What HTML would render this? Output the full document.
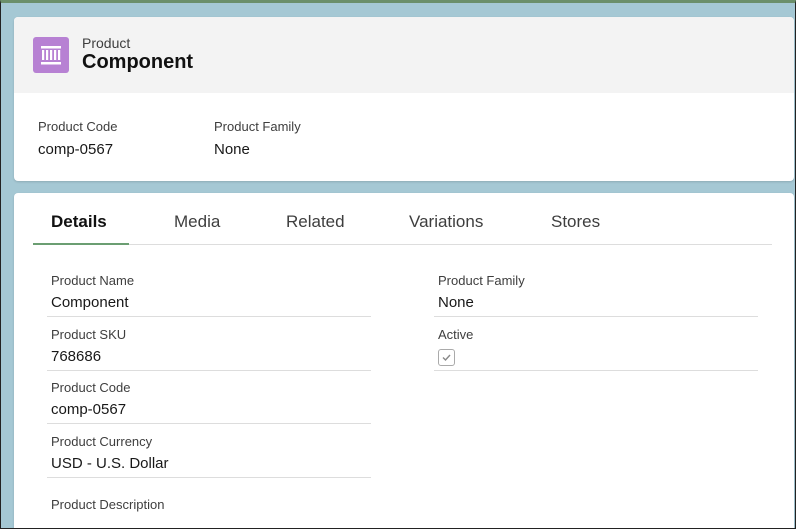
<!DOCTYPE html>
<html><head><style>
*{margin:0;padding:0;box-sizing:border-box}
body{width:796px;height:529px;overflow:hidden;background:#a5c8d4;font-family:"Liberation Sans",Arial,sans-serif;color:#181818;position:relative}
.frame{position:absolute;inset:0;border:1px solid #222;border-top:3px solid #6b8f6a;pointer-events:none;z-index:5}
.card{position:absolute;left:14px;right:2px;background:#fff;border-radius:4px;overflow:hidden;box-shadow:0 1px 2px rgba(0,0,0,.15)}
.c1{top:17px;height:164px}
.hd{background:#f3f3f3;height:76px;position:relative}
.icon{position:absolute;left:19px;top:20px;width:36px;height:36px;background:#b781d3;border-radius:3px}
.t1{position:absolute;left:68px;top:18px;font-size:14px;color:#3e3e3e}
.t2{position:absolute;left:68px;top:34px;font-size:20px;font-weight:bold;color:#111}
.lbl{position:absolute;font-size:13px;color:#3e3e3e}
.val{position:absolute;font-size:15px;color:#181818}
.c2{top:193px;bottom:0;border-radius:4px 4px 0 0}
.tab{position:absolute;top:19px;font-size:17px;color:#3e3e3e}
.fl{position:absolute;border-bottom:1px solid #ddd;height:1px}
</style></head><body>
<div class="card c1">
 <div class="hd">
  <div class="icon"><svg width="36" height="36" viewBox="0 0 36 36"><rect x="8" y="9" width="20" height="2.5" fill="#fff"/><rect x="8" y="25" width="20" height="2.5" fill="#fff"/><g fill="#fff"><rect x="9" y="13" width="2.2" height="10"/><rect x="13" y="13" width="2.2" height="10"/><rect x="17" y="13" width="2.2" height="10"/><rect x="21" y="13" width="2.2" height="10"/><rect x="25" y="13" width="2.2" height="10"/></g></svg></div>
  <div class="t1">Product</div>
  <div class="t2">Component</div>
 </div>
 <div class="lbl" style="left:24px;top:102px">Product Code</div>
 <div class="val" style="left:24px;top:124px">comp-0567</div>
 <div class="lbl" style="left:200px;top:102px">Product Family</div>
 <div class="val" style="left:200px;top:124px">None</div>
</div>
<div class="card c2">
 <div class="tab" style="left:37px;font-weight:bold;color:#111">Details</div>
 <div class="tab" style="left:160px">Media</div>
 <div class="tab" style="left:272px">Related</div>
 <div class="tab" style="left:395px">Variations</div>
 <div class="tab" style="left:537px">Stores</div>
 <div style="position:absolute;left:19px;top:51px;width:739px;height:1px;background:#ddd"></div>
 <div style="position:absolute;left:19px;top:50px;width:96px;height:2px;background:#6b9e72"></div>
 <div class="lbl" style="left:37px;top:80px">Product Name</div>
 <div class="val" style="left:37px;top:101px">Component</div>
 <div class="fl" style="left:33px;width:324px;top:123px"></div>
 <div class="lbl" style="left:37px;top:134px">Product SKU</div>
 <div class="val" style="left:37px;top:155px">768686</div>
 <div class="fl" style="left:33px;width:324px;top:177px"></div>
 <div class="lbl" style="left:37px;top:187px">Product Code</div>
 <div class="val" style="left:37px;top:208px">comp-0567</div>
 <div class="fl" style="left:33px;width:324px;top:230px"></div>
 <div class="lbl" style="left:37px;top:241px">Product Currency</div>
 <div class="val" style="left:37px;top:262px">USD - U.S. Dollar</div>
 <div class="fl" style="left:33px;width:324px;top:284px"></div>
 <div class="lbl" style="left:37px;top:304px">Product Description</div>
 <div class="lbl" style="left:424px;top:80px">Product Family</div>
 <div class="val" style="left:424px;top:101px">None</div>
 <div class="fl" style="left:420px;width:324px;top:123px"></div>
 <div class="lbl" style="left:424px;top:134px">Active</div>
 <div style="position:absolute;left:424px;top:156px;width:17px;height:17px;border:1px solid #aaa;border-radius:3px"><svg width="15" height="15" viewBox="0 0 15 15" style="position:absolute;left:0;top:0"><path d="M4 7.5l2.5 2.5L11 5" fill="none" stroke="#888" stroke-width="1.4"/></svg></div>
 <div class="fl" style="left:420px;width:324px;top:177px"></div>
</div>
<div class="frame"></div>
</body></html>
